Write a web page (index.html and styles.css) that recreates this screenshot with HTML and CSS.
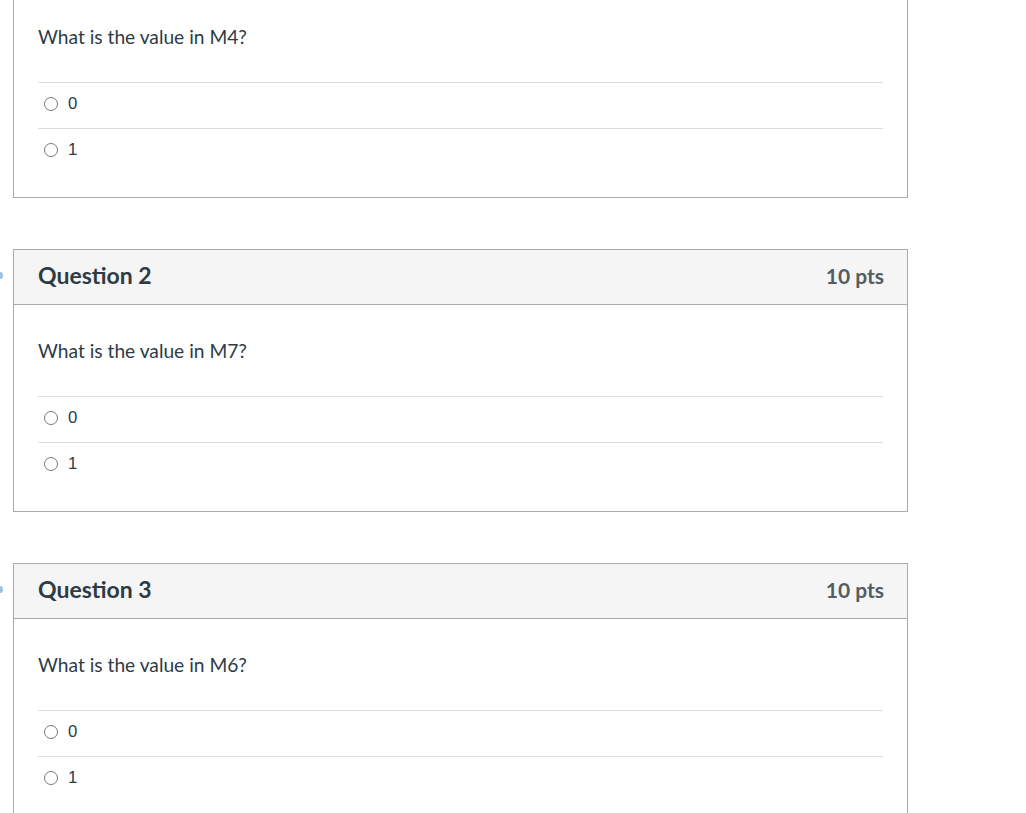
FILE: index.html
```html
<!DOCTYPE html>
<html>
<head>
<meta charset="utf-8">
<link rel="stylesheet" href="styles.css">
</head>
<body>
<div class="quiz">
  <div class="question">
    <span class="marker"></span>
    <div class="q-header"><span class="q-title">Question 1</span><span class="q-pts">10 pts</span></div>
    <div class="q-body">
      <p class="q-text">What is the value in M4?</p>
      <div class="answers">
        <label class="answer"><span class="radio"></span><span class="a-text">0</span></label>
        <label class="answer"><span class="radio"></span><span class="a-text">1</span></label>
      </div>
    </div>
  </div>
  <div class="question">
    <span class="marker"></span>
    <div class="q-header"><span class="q-title">Question 2</span><span class="q-pts">10 pts</span></div>
    <div class="q-body">
      <p class="q-text">What is the value in M7?</p>
      <div class="answers">
        <label class="answer"><span class="radio"></span><span class="a-text">0</span></label>
        <label class="answer"><span class="radio"></span><span class="a-text">1</span></label>
      </div>
    </div>
  </div>
  <div class="question">
    <span class="marker"></span>
    <div class="q-header"><span class="q-title">Question 3</span><span class="q-pts">10 pts</span></div>
    <div class="q-body">
      <p class="q-text">What is the value in M6?</p>
      <div class="answers">
        <label class="answer"><span class="radio"></span><span class="a-text">0</span></label>
        <label class="answer"><span class="radio"></span><span class="a-text">1</span></label>
      </div>
    </div>
  </div>
</div>
</body>
</html>
```
FILE: styles.css
```css
html, body {
  margin: 0;
  padding: 0;
  background: #fff;
  overflow: hidden;
}
body {
  font-family: Lato, "Open Sans", "Liberation Sans", sans-serif;
  color: #2d3b45;
}
.quiz {
  margin-top: -65px;
  padding-left: 13px;
  width: 895px;
  display: flex;
  flex-direction: column;
  gap: 51px;
}
.question {
  position: relative;
  border: 1px solid #aaaaaa;
  background: #fff;
}
.marker {
  position: absolute;
  left: -16px;
  top: 22px;
  width: 5px;
  height: 7px;
  border-radius: 50%;
  background: #9ec3e0;
}
.q-header {
  box-sizing: border-box;
  height: 55px;
  background: #f5f5f5;
  border-bottom: 1px solid #aaaaaa;
  display: flex;
  align-items: center;
  justify-content: space-between;
  padding: 0 23px 4px 24px;
}
.q-title {
  font-size: 23px;
  font-weight: 700;
  color: #2d3b45;
}
.q-pts {
  font-size: 21px;
  font-weight: 700;
  color: #545d63;
}
.q-body {
  padding: 32px 24px 23px 24px;
}
.q-text {
  margin: 0 0 31px 0;
  font-size: 19.2px;
  line-height: 28px;
}
.answers {
  display: flex;
  flex-direction: column;
}
.answer {
  box-sizing: border-box;
  display: flex;
  align-items: center;
  height: 46px;
  border-top: 1px solid #dddddd;
  padding: 0 0 4px 6px;
}
.radio {
  border: 1px solid #777;
  border-radius: 50%;
  margin-right: 10px;
  box-sizing: border-box;
  width: 14px;
  height: 14px;
}
.a-text {
  font-family: "Liberation Sans", Arial, sans-serif;
  font-size: 16.8px;
  color: #2d3b45;
}
```
